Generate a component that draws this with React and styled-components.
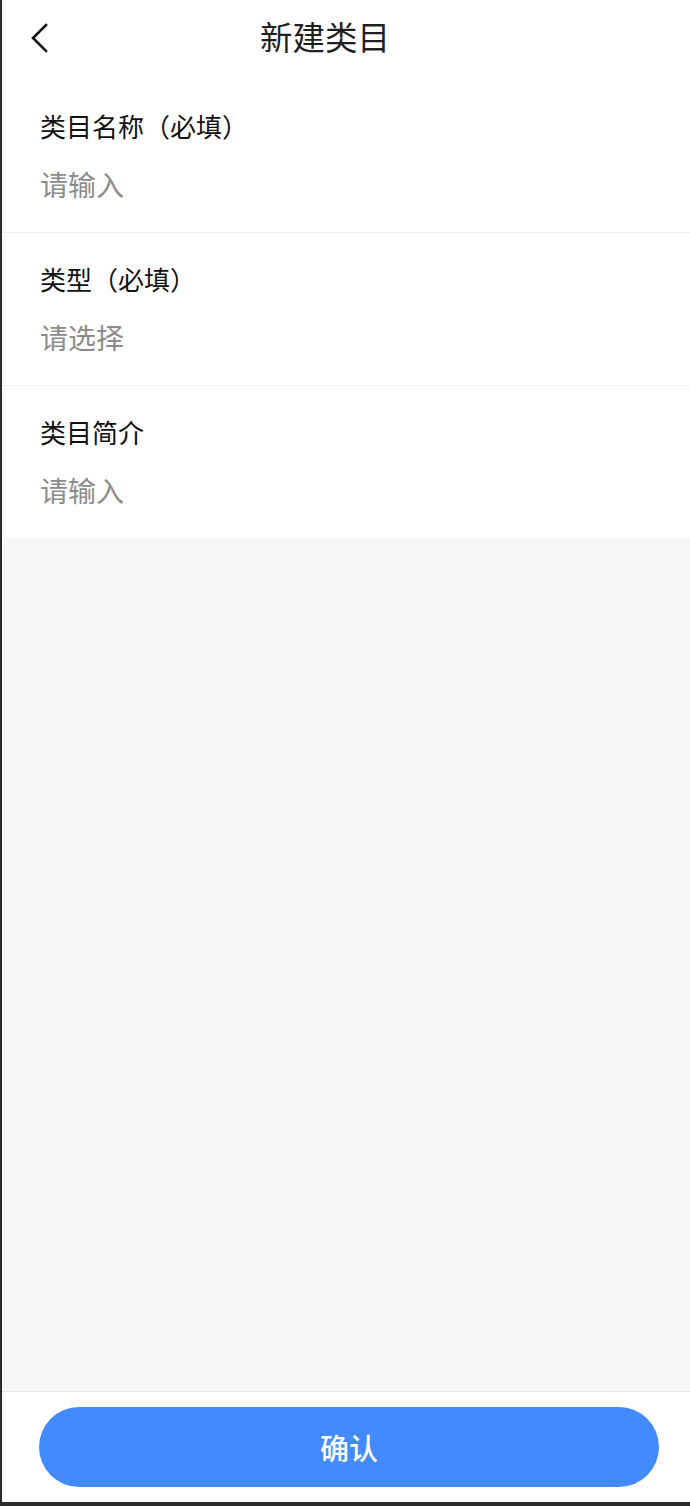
import styled, { createGlobalStyle } from "styled-components";

const GlobalStyle = createGlobalStyle`
  html, body {
    margin: 0;
    padding: 0;
  }
  body {
    font-family: "Noto Sans CJK SC", "Noto Sans", sans-serif;
    background: #ffffff;
  }
  * {
    box-sizing: border-box;
  }
`;

const Page = styled.div`
  display: flex;
  flex-direction: column;
  min-height: 100vh;
  border-left: 2px solid #2b2b2b;
  border-bottom: 4px solid #2b2b2b;
  background: #ffffff;
`;

const Header = styled.header`
  display: grid;
  grid-template-columns: 1fr auto 1fr;
  align-items: center;
  height: 80px;
  padding: 0 68px 8px 26px;
`;

const BackButton = styled.button`
  justify-self: start;
  display: flex;
  align-items: center;
  margin-top: 4px;
  padding: 0;
  border: none;
  background: none;
  cursor: pointer;
`;

const Title = styled.h1`
  margin: 0;
  font-size: 32.5px;
  font-weight: 400;
  color: #1f1f1f;
  line-height: 40px;
`;

const Field = styled.div`
  display: flex;
  flex-direction: column;
  padding: 26px 38px 28px;
  background: #ffffff;
  border-bottom: ${(p) => (p.$last ? "none" : "1px solid #eeeeee")};
`;

const Label = styled.label`
  font-size: 26px;
  line-height: 40px;
  color: #111111;
`;

const Input = styled.input`
  margin-top: 18px;
  padding: 0;
  border: none;
  outline: none;
  font-family: inherit;
  font-size: 28px;
  line-height: 40px;
  height: 40px;
  color: #111111;
  background: transparent;
  &::placeholder {
    color: #8c8c8c;
  }
`;

const Filler = styled.div`
  flex: 1;
  background: #f5f6f8;
`;

const Footer = styled.footer`
  padding: 15px 31px 15px 37px;
  border-top: 1px solid #e6e8eb;
  background: #ffffff;
`;

const ConfirmButton = styled.button`
  display: block;
  width: 100%;
  height: 80px;
  border: none;
  border-radius: 40px;
  background: #438aff;
  color: #ffffff;
  font-family: inherit;
  font-size: 29px;
  font-weight: 500;
  cursor: pointer;
`;

const fields = [
  { label: "类目名称（必填）", placeholder: "请输入" },
  { label: "类型（必填）", placeholder: "请选择" },
  { label: "类目简介", placeholder: "请输入" },
];

export default function App() {
  return (
    <>
      <GlobalStyle />
      <Page>
        <Header>
          <BackButton aria-label="返回">
            <svg width="22" height="32" viewBox="0 0 22 32" fill="none">
              <path
                d="M18 3 L5 16 L18 29"
                stroke="#111"
                strokeWidth="2.6"
                strokeLinecap="square"
              />
            </svg>
          </BackButton>
          <Title>新建类目</Title>
          <span />
        </Header>
        {fields.map((f, i) => (
          <Field key={i} $last={i === fields.length - 1}>
            <Label>{f.label}</Label>
            <Input placeholder={f.placeholder} />
          </Field>
        ))}
        <Filler />
        <Footer>
          <ConfirmButton>确认</ConfirmButton>
        </Footer>
      </Page>
    </>
  );
}
